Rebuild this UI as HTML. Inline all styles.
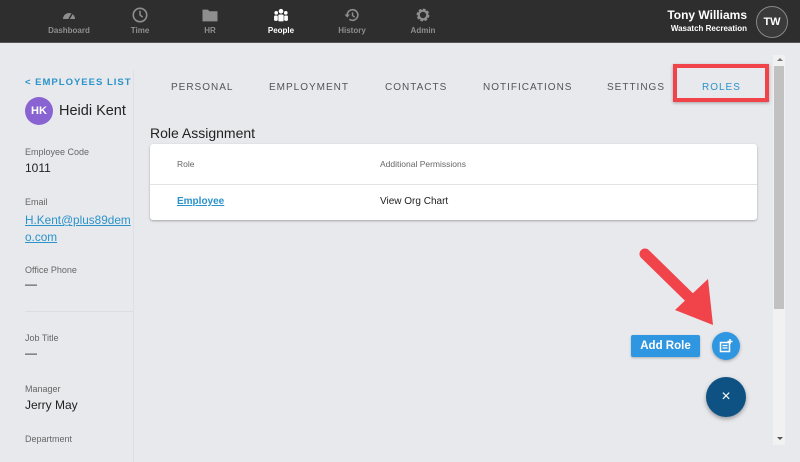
<!DOCTYPE html>
<html><head><meta charset="utf-8"><style>
*{margin:0;padding:0;box-sizing:border-box}
body{width:800px;height:462px;overflow:hidden;background:#e8e9ed;font-family:"Liberation Sans",sans-serif;position:relative;color:#222}
.top{position:absolute;left:0;top:0;width:800px;height:43px;background:#2e2e2e;border-bottom:1px solid #555}
.nav{position:absolute;top:0;width:70px;text-align:center;color:#8e8e8e;font-size:8px;font-weight:bold}
.nav svg{display:block;position:absolute;left:50%;top:15px;transform:translate(-50%,-50%)}
.nav span{display:block;position:absolute;left:0;width:70px;top:26px}
.abs{position:absolute}
.lbl{position:absolute;left:25px;font-size:9px;color:#666}
.val{position:absolute;left:25px;font-size:12px;color:#222}
.tab{position:absolute;top:82px;font-size:10px;letter-spacing:1px;color:#555;font-weight:500}
</style></head><body>
<div class="top">
  <div class="nav" style="left:34px"><svg width="16" height="12" viewBox="0 0 14 12"><path d="M1 10A6 6 0 0 1 13 10Z" fill="#8e8e8e"/><path d="M7 10L10 5" stroke="#2e2e2e" stroke-width="1.5"/></svg><span>Dashboard</span></div>
  <div class="nav" style="left:105px"><svg width="16" height="16" viewBox="0 0 15 15"><circle cx="7.5" cy="7.5" r="6.3" fill="none" stroke="#8e8e8e" stroke-width="1.5"/><path d="M7.5 3.5V7.5L10 9.5" stroke="#8e8e8e" stroke-width="1.4" fill="none"/></svg><span>Time</span></div>
  <div class="nav" style="left:175px"><svg width="15" height="13" viewBox="0 0 14 12"><path d="M0 1H5L6.5 2.5H14V12H0Z" fill="#8e8e8e"/></svg><span>HR</span></div>
  <div class="nav" style="left:246px;color:#fff"><svg width="16" height="13" viewBox="0 0 15 12"><circle cx="7.5" cy="2.5" r="2.2" fill="#fff"/><circle cx="3" cy="4" r="1.7" fill="#fff"/><circle cx="12" cy="4" r="1.7" fill="#fff"/><rect x="5" y="5.5" width="5" height="6.5" rx="1" fill="#fff"/><rect x="1" y="6.5" width="3.5" height="5" rx="1" fill="#fff"/><rect x="10.5" y="6.5" width="3.5" height="5" rx="1" fill="#fff"/></svg><span>People</span></div>
  <div class="nav" style="left:317px"><svg width="16" height="14" viewBox="0 0 15 13"><path d="M3 6.5A5 5 0 1 1 5 10.5" fill="none" stroke="#8e8e8e" stroke-width="1.5"/><path d="M0.5 6L3 9L5.5 6Z" fill="#8e8e8e"/><path d="M8 4V7L10 8.5" stroke="#8e8e8e" stroke-width="1.3" fill="none"/></svg><span>History</span></div>
  <div class="nav" style="left:388px"><svg width="15" height="15" viewBox="0 0 14 14"><circle cx="7" cy="7" r="4.5" fill="none" stroke="#8e8e8e" stroke-width="3" stroke-dasharray="2.2 1.3"/><circle cx="7" cy="7" r="4" fill="none" stroke="#8e8e8e" stroke-width="2"/></svg><span>Admin</span></div>
  <div class="abs" style="right:53px;top:8px;color:#fff;font-size:12px;font-weight:bold;text-align:right">Tony Williams<div style="font-size:8px;margin-top:2px">Wasatch Recreation</div></div>
  <div class="abs" style="left:756px;top:6px;width:32px;height:32px;border-radius:50%;border:1px solid #888;background:#3a3a3a;color:#fff;font-size:11px;font-weight:bold;text-align:center;line-height:30px">TW</div>
</div>
<div class="abs" style="left:133px;top:70px;width:1px;height:392px;background:#dfe0e4"></div>
<div class="abs" style="left:25px;top:77px;font-size:9.5px;font-weight:bold;color:#2a93c9;letter-spacing:1px">&lt; EMPLOYEES LIST</div>
<div class="abs" style="left:25px;top:97px;width:28px;height:28px;border-radius:50%;background:#8a63d2;color:#fff;font-size:11px;font-weight:bold;text-align:center;line-height:28px">HK</div>
<div class="abs" style="left:59px;top:103px;font-size:14.5px;color:#222">Heidi Kent</div>
<div class="lbl" style="top:147px">Employee Code</div><div class="val" style="top:161px">1011</div>
<div class="lbl" style="top:197px">Email</div>
<div class="val" style="top:212px;color:#2a93c9;text-decoration:underline;line-height:17px;font-size:11.8px">H.Kent@plus89dem<br>o.com</div>
<div class="lbl" style="top:265px">Office Phone</div><div class="val" style="top:277px">—</div>
<div class="abs" style="left:25px;top:311px;width:108px;height:1px;background:#dcdde1"></div>
<div class="lbl" style="top:333px">Job Title</div><div class="val" style="top:346px">—</div>
<div class="lbl" style="top:384px">Manager</div><div class="val" style="top:398px">Jerry May</div>
<div class="lbl" style="top:434px">Department</div>
<div class="tab" style="left:171px">PERSONAL</div>
<div class="tab" style="left:269px">EMPLOYMENT</div>
<div class="tab" style="left:385px">CONTACTS</div>
<div class="tab" style="left:483px">NOTIFICATIONS</div>
<div class="tab" style="left:607px">SETTINGS</div>
<div class="tab" style="left:702px;color:#2a93c9">ROLES</div>
<div class="abs" style="left:673px;top:64px;width:96px;height:38px;border:4px solid #f0444a;box-shadow:0 1px 3px rgba(0,0,0,.3)"></div>
<div class="abs" style="left:150px;top:125px;font-size:14px;color:#222">Role Assignment</div>
<div class="abs" style="left:150px;top:144px;width:607px;height:76px;background:#fff;border-radius:3px;box-shadow:0 1px 2px rgba(0,0,0,.3)">
  <div class="abs" style="left:27px;top:15px;font-size:8.5px;color:#666">Role</div>
  <div class="abs" style="left:230px;top:15px;font-size:8.5px;color:#666">Additional Permissions</div>
  <div class="abs" style="left:0;top:40px;width:607px;height:1px;background:#e3e3e3"></div>
  <div class="abs" style="left:27px;top:52px;font-size:10px;color:#2a93c9;text-decoration:underline;font-weight:bold">Employee</div>
  <div class="abs" style="left:230px;top:52px;font-size:10px;color:#222">View Org Chart</div>
</div>
<div class="abs" style="left:773px;top:55px;width:12px;height:390px;background:#f1f1f1"></div>
<div class="abs" style="left:774px;top:66px;width:10px;height:243px;background:#c1c1c1"></div>
<div class="abs" style="left:777px;top:58px;border:3px solid transparent;border-bottom:3px solid #777;border-top:0"></div>
<div class="abs" style="left:777px;top:437px;border:3px solid transparent;border-top:3px solid #555;border-bottom:0"></div>
<svg class="abs" style="left:630px;top:240px" width="100" height="100" viewBox="0 0 100 100">
<line x1="15" y1="14" x2="62" y2="60" stroke="#f0444a" stroke-width="11" stroke-linecap="round"/>
<path d="M45 70L78 39L83 85Z" fill="#f0444a"/>
</svg>
<div class="abs" style="left:631px;top:335px;width:69px;height:22px;background:#2f97e1;border-radius:2px;color:#fff;font-size:11.5px;font-weight:bold;text-align:center;line-height:22px;box-shadow:0 1px 2px rgba(0,0,0,.25)">Add Role</div>
<div class="abs" style="left:712px;top:332px;width:28px;height:28px;border-radius:50%;background:#2f97e1;box-shadow:0 1px 3px rgba(0,0,0,.3)">
<svg width="28" height="28" viewBox="0 0 28 28"><rect x="8.5" y="10.5" width="9" height="9" fill="none" stroke="#fff" stroke-width="1.5"/><path d="M10.5 13.5H15.5M10.5 16H15.5" stroke="#fff" stroke-width="1.2"/><path d="M18 7V12M15.5 9.5H20.5" stroke="#fff" stroke-width="1.5"/></svg></div>
<div class="abs" style="left:706px;top:377px;width:40px;height:40px;border-radius:50%;background:#0d5282;box-shadow:0 2px 4px rgba(0,0,0,.35);color:#fff;font-size:16px;text-align:center;line-height:40px">×</div>
</body></html>
